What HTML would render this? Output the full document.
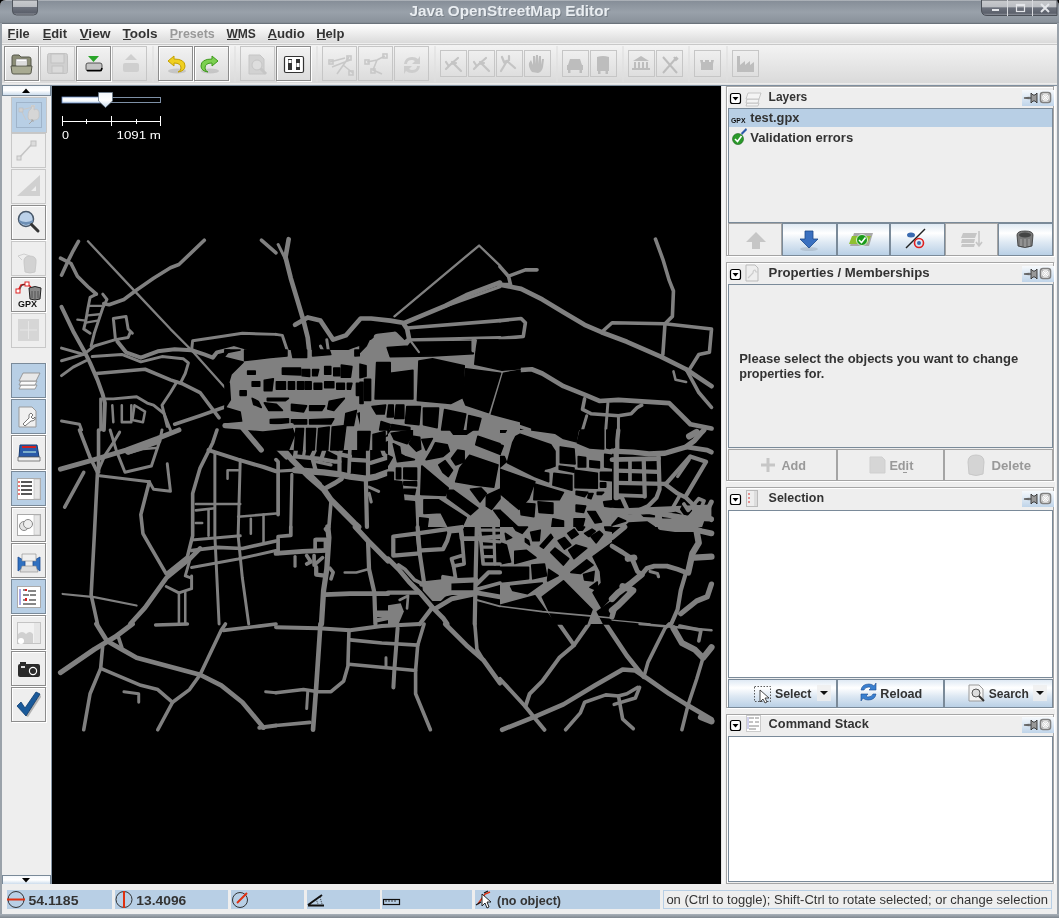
<!DOCTYPE html><html><head><meta charset="utf-8"><title>JOSM</title><style>html,body{margin:0;padding:0;width:1059px;height:918px;overflow:hidden;background:#000}body{position:relative;font-family:"Liberation Sans",sans-serif}</style></head><body><svg width="1059" height="918" viewBox="0 0 1059 918" font-family="Liberation Sans, sans-serif" style="position:absolute;left:0;top:0;will-change:transform"><defs>
<linearGradient id="gOcean" x1="0" y1="0" x2="0" y2="1"><stop offset="0" stop-color="#dde8f3"/><stop offset="0.3" stop-color="#fff"/><stop offset="0.6" stop-color="#dde8f3"/><stop offset="1" stop-color="#b8cfe5"/></linearGradient>
<linearGradient id="gMenu" x1="0" y1="0" x2="0" y2="1"><stop offset="0" stop-color="#fff"/><stop offset="1" stop-color="#dadada"/></linearGradient>
<linearGradient id="gTool" x1="0" y1="0" x2="0" y2="1"><stop offset="0" stop-color="#f3f3f3"/><stop offset="1" stop-color="#dadada"/></linearGradient>
<linearGradient id="gTitle" x1="0" y1="0" x2="0" y2="1"><stop offset="0" stop-color="#c4c8cc"/><stop offset="0.05" stop-color="#868e98"/><stop offset="0.5" stop-color="#99a1aa"/><stop offset="0.92" stop-color="#8a929b"/><stop offset="1" stop-color="#6b737b"/></linearGradient>
<linearGradient id="gScroll" x1="0" y1="0" x2="0" y2="1"><stop offset="0" stop-color="#f4f8fc"/><stop offset="0.5" stop-color="#fff"/><stop offset="1" stop-color="#c6d8ea"/></linearGradient>
<linearGradient id="gHdrBtn" x1="0" y1="0" x2="0" y2="1"><stop offset="0" stop-color="#f6f9fc"/><stop offset="1" stop-color="#bfd4e9"/></linearGradient>
<linearGradient id="gWinBtn" x1="0" y1="0" x2="0" y2="1"><stop offset="0" stop-color="#c9cbce"/><stop offset="0.45" stop-color="#babdc2"/><stop offset="0.5" stop-color="#6c717c"/><stop offset="0.85" stop-color="#5c616c"/><stop offset="1" stop-color="#9ca0a8"/></linearGradient>
<linearGradient id="gFrameB" x1="0" y1="0" x2="0" y2="1"><stop offset="0" stop-color="#aab2ba"/><stop offset="1" stop-color="#7f878f"/></linearGradient>
</defs><rect x="0" y="0" width="1059" height="918" fill="#eeeeee" />
<path d="M0,24 L0,6 Q0,0 6,0 L1053,0 Q1059,0 1059,6 L1059,24 Z" fill="url(#gTitle)"/>
<path d="M0,0 L6,0 Q0,0 0,6 Z M1059,0 L1053,0 Q1059,0 1059,6 Z" fill="#000"/>
<rect x="0" y="23" width="1059" height="1" fill="#6b737b" />
<path d="M12.5,0 L12.5,11 Q12.5,15 16.5,15 L33.5,15 Q37.5,15 37.5,11 L37.5,0 Z" fill="url(#gWinBtn)" stroke="#50555d" stroke-width="1"/>
<text x="409.5" y="16" font-size="14" font-weight="bold" fill="#5a626a" textLength="200" lengthAdjust="spacingAndGlyphs" opacity="0.5" transform="translate(1,1)">Java OpenStreetMap Editor</text>
<text x="409.5" y="16" font-size="14" font-weight="bold" fill="#e9edf1" textLength="200" lengthAdjust="spacingAndGlyphs" >Java OpenStreetMap Editor</text>
<path d="M981.5,0 L981.5,10 Q981.5,15.5 987,15.5 L1057,15.5 L1057,0 Z" fill="url(#gWinBtn)" stroke="#4a4f57" stroke-width="1"/>
<rect x="1007" y="0" width="1" height="16" fill="#d8dade" />
<rect x="1032" y="0" width="1" height="16" fill="#d8dade" />
<rect x="992" y="9" width="7" height="2" fill="#e4e6ea" />
<rect x="1016.5" y="4.5" width="8" height="7" fill="none" stroke="#e4e6ea" stroke-width="1.2" />
<rect x="1016" y="5" width="9" height="1" fill="#e4e6ea" />
<path d="M1041,4 L1049,12 M1049,4 L1041,12" stroke="#e4e6ea" stroke-width="2"/>
<rect x="0" y="23" width="2" height="895" fill="#9aa2aa" />
<rect x="1057" y="23" width="2" height="895" fill="#9aa2aa" />
<rect x="0" y="914" width="1059" height="4" fill="url(#gFrameB)" />
<rect x="2" y="24" width="1055" height="19" fill="url(#gMenu)" />
<rect x="2" y="43" width="1055" height="1" fill="#eeeeee" />
<rect x="2" y="44" width="1055" height="1" fill="#c8c8c8" />
<text x="7.6" y="37.8" font-size="12" font-weight="bold" fill="#333" textLength="22" lengthAdjust="spacingAndGlyphs" >File</text>
<rect x="8" y="39" width="8" height="1" fill="#333" />
<text x="42.699999999999996" y="37.8" font-size="12" font-weight="bold" fill="#333" textLength="24.3" lengthAdjust="spacingAndGlyphs" >Edit</text>
<rect x="43" y="39" width="8" height="1" fill="#333" />
<text x="79.4" y="37.8" font-size="12" font-weight="bold" fill="#333" textLength="31.2" lengthAdjust="spacingAndGlyphs" >View</text>
<rect x="80" y="39" width="9" height="1" fill="#333" />
<text x="122.60000000000001" y="37.8" font-size="12" font-weight="bold" fill="#333" textLength="35" lengthAdjust="spacingAndGlyphs" >Tools</text>
<rect x="123" y="39" width="8" height="1" fill="#333" />
<text x="169.8" y="37.8" font-size="12" font-weight="bold" fill="#999" textLength="45" lengthAdjust="spacingAndGlyphs" >Presets</text>
<rect x="170" y="39" width="9" height="1" fill="#999" />
<text x="226.4" y="37.8" font-size="12" font-weight="bold" fill="#333" textLength="29.4" lengthAdjust="spacingAndGlyphs" >WMS</text>
<rect x="227" y="39" width="12" height="1" fill="#333" />
<text x="267.4" y="37.8" font-size="12" font-weight="bold" fill="#333" textLength="37.5" lengthAdjust="spacingAndGlyphs" >Audio</text>
<rect x="268" y="39" width="9" height="1" fill="#333" />
<text x="316.2" y="37.8" font-size="12" font-weight="bold" fill="#333" textLength="28.2" lengthAdjust="spacingAndGlyphs" >Help</text>
<rect x="317" y="39" width="9" height="1" fill="#333" />
<rect x="2" y="45" width="1055" height="38" fill="url(#gTool)" />
<rect x="2" y="83" width="1055" height="1" fill="#ececec" />
<rect x="2" y="84" width="1055" height="1" fill="#e2e2e2" />
<rect x="5.5" y="47.5" width="34" height="34" fill="none" stroke="#ffffff" stroke-width="1" />
<rect x="4.5" y="46.5" width="34" height="34" fill="none" stroke="#8c8c8c" stroke-width="1" />
<rect x="40.5" y="46.5" width="34" height="34" fill="none" stroke="#c6c6c6" stroke-width="1" />
<rect x="77.5" y="47.5" width="34" height="34" fill="none" stroke="#ffffff" stroke-width="1" />
<rect x="76.5" y="46.5" width="34" height="34" fill="none" stroke="#8c8c8c" stroke-width="1" />
<rect x="112.5" y="46.5" width="34" height="34" fill="none" stroke="#c6c6c6" stroke-width="1" />
<rect x="159.5" y="47.5" width="34" height="34" fill="none" stroke="#ffffff" stroke-width="1" />
<rect x="158.5" y="46.5" width="34" height="34" fill="none" stroke="#8c8c8c" stroke-width="1" />
<rect x="195.5" y="47.5" width="34" height="34" fill="none" stroke="#ffffff" stroke-width="1" />
<rect x="194.5" y="46.5" width="34" height="34" fill="none" stroke="#8c8c8c" stroke-width="1" />
<rect x="240.5" y="46.5" width="34" height="34" fill="none" stroke="#c6c6c6" stroke-width="1" />
<rect x="277.5" y="47.5" width="34" height="34" fill="none" stroke="#ffffff" stroke-width="1" />
<rect x="276.5" y="46.5" width="34" height="34" fill="none" stroke="#8c8c8c" stroke-width="1" />
<rect x="322.5" y="46.5" width="34" height="34" fill="none" stroke="#c6c6c6" stroke-width="1" />
<rect x="358.5" y="46.5" width="34" height="34" fill="none" stroke="#c6c6c6" stroke-width="1" />
<rect x="394.5" y="46.5" width="34" height="34" fill="none" stroke="#c6c6c6" stroke-width="1" />
<rect x="440.5" y="50.5" width="26" height="26" fill="none" stroke="#c6c6c6" stroke-width="1" />
<rect x="468.5" y="50.5" width="26" height="26" fill="none" stroke="#c6c6c6" stroke-width="1" />
<rect x="496.5" y="50.5" width="26" height="26" fill="none" stroke="#c6c6c6" stroke-width="1" />
<rect x="524.5" y="50.5" width="26" height="26" fill="none" stroke="#c6c6c6" stroke-width="1" />
<rect x="562.5" y="50.5" width="26" height="26" fill="none" stroke="#c6c6c6" stroke-width="1" />
<rect x="590.5" y="50.5" width="26" height="26" fill="none" stroke="#c6c6c6" stroke-width="1" />
<rect x="628.5" y="50.5" width="26" height="26" fill="none" stroke="#c6c6c6" stroke-width="1" />
<rect x="656.5" y="50.5" width="26" height="26" fill="none" stroke="#c6c6c6" stroke-width="1" />
<rect x="694.5" y="50.5" width="26" height="26" fill="none" stroke="#c6c6c6" stroke-width="1" />
<rect x="732.5" y="50.5" width="26" height="26" fill="none" stroke="#c6c6c6" stroke-width="1" />
<rect x="152" y="46" width="2" height="36" fill="#e0e0e0" opacity="0.6"/>
<rect x="234" y="46" width="2" height="36" fill="#e0e0e0" opacity="0.6"/>
<rect x="316" y="46" width="2" height="36" fill="#e0e0e0" opacity="0.6"/>
<rect x="434" y="46" width="2" height="36" fill="#e0e0e0" opacity="0.6"/>
<rect x="556" y="46" width="2" height="36" fill="#e0e0e0" opacity="0.6"/>
<rect x="622" y="46" width="2" height="36" fill="#e0e0e0" opacity="0.6"/>
<rect x="688" y="46" width="2" height="36" fill="#e0e0e0" opacity="0.6"/>
<rect x="726" y="46" width="2" height="36" fill="#e0e0e0" opacity="0.6"/>

<!-- open folder -->
<g transform="translate(11,54)">
<path d="M1,3 Q1,1 3,1 L8,1 L10,3 L18,3 Q20,3 20,5 L20,12 L1,12 Z" fill="#8b8d76" stroke="#55574a" stroke-width="1"/>
<rect x="5" y="5" width="11" height="8" fill="#fff" stroke="#777" stroke-width="0.6"/>
<path d="M6,8 H15 M6,10 H15" stroke="#aaa" stroke-width="0.8"/>
<path d="M0,12 L21,12 L20,19 Q20,20 18,20 L3,20 Q1,20 1,19 Z" fill="#a9ab93" stroke="#55574a" stroke-width="1"/>
</g>
<!-- save disabled -->
<g transform="translate(47,53)" fill="#d0d0d0" stroke="#c2c2c2">
<rect x="0.5" y="0.5" width="20" height="20" rx="2"/>
<rect x="4" y="1" width="13" height="9" fill="#dadada"/>
<rect x="5" y="13" width="11" height="7" fill="#dadada"/>
</g>
<!-- download -->
<g transform="translate(85,55)">
<path d="M3,1 L14,1 L8.5,7 Z" fill="#2aa52a"/>
<rect x="1" y="8" width="16" height="8" rx="2" fill="#c4c4c4" stroke="#333" stroke-width="0.8"/>
<path d="M2,15.5 H16 L17,13" stroke="#000" stroke-width="1.6" fill="none"/>
</g>
<!-- upload disabled -->
<g transform="translate(121,53)" fill="#cfcfcf">
<path d="M4,7 L10,1 L16,7 Z"/><rect x="2" y="10" width="16" height="9" rx="2"/>
</g>
<!-- undo -->
<g transform="translate(166,54)">
<ellipse cx="11" cy="17" rx="9" ry="2.5" fill="#000" opacity="0.12"/>
<path d="M8,2 L2,7 L8,12 L8,9 Q15,9 15,14 Q15,17 12,18 Q19,17 19,12 Q19,5 8,5 Z" fill="#f0d020" stroke="#c4a000" stroke-width="1"/>
</g>
<!-- redo -->
<g transform="translate(200,54)">
<ellipse cx="10" cy="17" rx="9" ry="2.5" fill="#000" opacity="0.12"/>
<path d="M12,2 L18,7 L12,12 L12,9 Q5,9 5,14 Q5,17 8,18 Q1,17 1,12 Q1,5 12,5 Z" fill="#7cd050" stroke="#3e9a1c" stroke-width="1"/>
</g>
<!-- zoom doc disabled -->
<g transform="translate(248,54)" fill="#d2d2d2" stroke="#c6c6c6">
<path d="M1,1 L12,1 L16,5 L16,20 L1,20 Z"/>
<circle cx="9" cy="11" r="5" fill="#dedede"/>
<path d="M12.5,14.5 L18,20" stroke-width="3"/>
</g>
<!-- preferences -->
<g transform="translate(284,56)">
<rect x="0.5" y="0.5" width="19" height="16" rx="1.5" fill="#fff" stroke="#333" stroke-width="1.2"/>
<rect x="4" y="3" width="4" height="11" fill="#333"/><rect x="4.5" y="4" width="3" height="3" fill="#fff"/>
<rect x="12" y="3" width="4" height="11" fill="#333"/><rect x="12.5" y="7" width="3" height="4" fill="#fff"/>
</g>
<!-- disabled drawing tools -->
<g stroke="#c8c8c8" fill="none" stroke-width="1.6">
<path d="M330,62 L345,58 M332,67 L350,60 M337,74 L349,57 M343,65 L353,73"/>
<rect x="329" y="60" width="4" height="4"/><rect x="347" y="56" width="4" height="4"/><rect x="349" y="71" width="4" height="4"/>
<path d="M367,62 L377,60 L385,56 M377,60 L373,70 L382,74"/>
<rect x="365" y="60" width="4" height="4"/><rect x="383" y="54" width="4" height="4"/><rect x="371" y="69" width="4" height="4"/>
</g>
<g transform="translate(402,55)" fill="#cdcdcd">
<path d="M2,9 Q3,2 10,2 Q14,2 16,4 L18,1 L18,9 L10,9 L13,6 Q11,5 10,5 Q5,5 5,9 Z"/>
<path d="M18,11 Q17,18 10,18 Q6,18 4,16 L2,19 L2,11 L10,11 L7,14 Q9,15 10,15 Q15,15 15,11 Z"/>
</g>
<g stroke="#c4c4c4" fill="none" stroke-width="2.2" stroke-linecap="round">
<path d="M446,69 L451,64 L456,63 M451,64 L458,58 M452,62 L461,71 M448,65 L446,62"/>
<path d="M474,69 L479,64 L484,63 M479,64 L486,58 M480,62 L489,71 M476,65 L474,62"/>
<path d="M502,57 L504,62 L509,60 L509,56 M507,61 L501,71 M507,61 L515,68"/>
</g>
<path d="M532,72 Q528,67 529,63 L531,60 L533,65 L533,56 L535,56 L535,64 L536,55 L538,55 L538,64 L539,56 L541,56 L541,65 L542,59 L544,59 L543,67 Q542,72 538,73 Z" fill="#bdbdbd"/>
<g fill="#bdbdbd">
<path d="M568,65 L570,59 L580,59 L582,65 L583,65 L583,70 L567,70 L567,65 Z"/><rect x="568" y="70" width="2.5" height="3"/><rect x="579.5" y="70" width="2.5" height="3"/>
<path d="M597,57 Q603,55 609,57 L609,71 L597,71 Z"/><rect x="598" y="71" width="2.5" height="3"/><rect x="605.5" y="71" width="2.5" height="3"/>
<path d="M633,61 L641,56 L649,61 Z"/><rect x="634" y="62" width="2" height="6"/><rect x="638" y="62" width="2" height="6"/><rect x="642" y="62" width="2" height="6"/><rect x="646" y="62" width="2" height="6"/><rect x="632" y="68" width="18" height="2"/>
<path d="M700,60 L703,60 L703,62 L705,62 L705,60 L709,60 L709,62 L711,62 L711,60 L714,60 L713,64 L713,70 L701,70 L701,64 Z"/>
<path d="M737,56 L740,56 L740,65 L745,61 L745,65 L750,61 L750,65 L754,62 L754,72 L737,72 Z"/>
</g>
<path d="M663,57 L677,73 M677,57 L663,73 M674,57 L676,60 L678,58" stroke="#bdbdbd" stroke-width="2" fill="none"/>

<rect x="2" y="85" width="49" height="799" fill="#eeeeee" />
<rect x="50" y="96" width="1" height="779" fill="#f6f6f6" />
<rect x="51" y="85" width="1" height="800" fill="#8696a6" />
<rect x="2" y="85" width="1055" height="1" fill="#7f8f9f" />
<rect x="2.5" y="85.5" width="48" height="10" fill="url(#gScroll)" stroke="#7a8a99"/>
<path d="M22,93 L26,88.5 L30,93 Z" fill="#000"/>
<rect x="2.5" y="875.5" width="48" height="9" fill="url(#gScroll)" stroke="#7a8a99"/>
<path d="M22,878 L26,882.5 L30,878 Z" fill="#000"/>
<rect x="11" y="97" width="36" height="36" fill="#b8cfe5" />
<rect x="11.5" y="97.5" width="35" height="35" fill="none" stroke="#c6c6c6" stroke-width="1" />
<rect x="11.5" y="133.5" width="34" height="34" fill="none" stroke="#c8c8c8" stroke-width="1" />
<rect x="11.5" y="169.5" width="34" height="34" fill="none" stroke="#c8c8c8" stroke-width="1" />
<rect x="12.5" y="206.5" width="34" height="34" fill="none" stroke="#fff" stroke-width="1" />
<rect x="11.5" y="205.5" width="34" height="34" fill="none" stroke="#8c8c8c" stroke-width="1" />
<rect x="11.5" y="241.5" width="34" height="34" fill="none" stroke="#c8c8c8" stroke-width="1" />
<rect x="12.5" y="278.5" width="34" height="34" fill="none" stroke="#fff" stroke-width="1" />
<rect x="11.5" y="277.5" width="34" height="34" fill="none" stroke="#8c8c8c" stroke-width="1" />
<rect x="11.5" y="313.5" width="34" height="34" fill="none" stroke="#c8c8c8" stroke-width="1" />
<rect x="11" y="363" width="35" height="35" fill="#b8cfe5" />
<rect x="11.5" y="363.5" width="34" height="34" fill="none" stroke="#7a8a99" stroke-width="1" />
<rect x="46" y="363" width="1" height="36" fill="#fff" />
<rect x="11" y="398" width="36" height="1" fill="#fff" />
<rect x="11" y="399" width="35" height="35" fill="#b8cfe5" />
<rect x="11.5" y="399.5" width="34" height="34" fill="none" stroke="#7a8a99" stroke-width="1" />
<rect x="46" y="399" width="1" height="36" fill="#fff" />
<rect x="11" y="434" width="36" height="1" fill="#fff" />
<rect x="12.5" y="436.5" width="34" height="34" fill="none" stroke="#fff" stroke-width="1" />
<rect x="11.5" y="435.5" width="34" height="34" fill="none" stroke="#8c8c8c" stroke-width="1" />
<rect x="11" y="471" width="35" height="35" fill="#b8cfe5" />
<rect x="11.5" y="471.5" width="34" height="34" fill="none" stroke="#7a8a99" stroke-width="1" />
<rect x="46" y="471" width="1" height="36" fill="#fff" />
<rect x="11" y="506" width="36" height="1" fill="#fff" />
<rect x="12.5" y="508.5" width="34" height="34" fill="none" stroke="#fff" stroke-width="1" />
<rect x="11.5" y="507.5" width="34" height="34" fill="none" stroke="#8c8c8c" stroke-width="1" />
<rect x="12.5" y="544.5" width="34" height="34" fill="none" stroke="#fff" stroke-width="1" />
<rect x="11.5" y="543.5" width="34" height="34" fill="none" stroke="#8c8c8c" stroke-width="1" />
<rect x="11" y="579" width="35" height="35" fill="#b8cfe5" />
<rect x="11.5" y="579.5" width="34" height="34" fill="none" stroke="#7a8a99" stroke-width="1" />
<rect x="46" y="579" width="1" height="36" fill="#fff" />
<rect x="11" y="614" width="36" height="1" fill="#fff" />
<rect x="12.5" y="616.5" width="34" height="34" fill="none" stroke="#fff" stroke-width="1" />
<rect x="11.5" y="615.5" width="34" height="34" fill="none" stroke="#8c8c8c" stroke-width="1" />
<rect x="12.5" y="652.5" width="34" height="34" fill="none" stroke="#fff" stroke-width="1" />
<rect x="11.5" y="651.5" width="34" height="34" fill="none" stroke="#8c8c8c" stroke-width="1" />
<rect x="12.5" y="688.5" width="34" height="34" fill="none" stroke="#fff" stroke-width="1" />
<rect x="11.5" y="687.5" width="34" height="34" fill="none" stroke="#8c8c8c" stroke-width="1" />

<!-- select tool -->
<rect x="16.5" y="102.5" width="25" height="25" fill="none" stroke="#9fb4ca"/>
<g stroke="#c8c8c8" fill="none" stroke-width="1"><path d="M21,110 L33,107 M21,110 L26,120"/></g>
<rect x="19" y="108" width="4" height="4" fill="#d0d0d0" stroke="#bbb" stroke-width="0.6"/>
<rect x="31" y="105" width="4" height="3" fill="#d0d0d0"/>
<path d="M28,117 Q28,110 31,109 L32,106 L34,106 L34,110 L36,109 L38,110 L39,112 L39,117 Q38,120 35,120 L31,120 Q28,120 28,117 Z" fill="#d6d6d6" stroke="#c4c4c4" stroke-width="0.8"/>
<path d="M29,124 L33,120 M31,120 L33,120 L33,122" stroke="#a8a8a8" stroke-width="1" fill="none"/>
<!-- draw line -->
<path d="M19,158 L33,143" stroke="#c4c4c4" stroke-width="1.6"/>
<rect x="17" y="156" width="4" height="4" fill="#e0e0e0" stroke="#c0c0c0"/><rect x="31" y="141" width="5" height="5" fill="#dcdcdc" stroke="#c0c0c0"/>
<!-- triangle -->
<path d="M17,196 L40,175 L40,196 Z M31,191 L36,191 L36,186 Z" fill="#d0d0d0" fill-rule="evenodd"/>
<!-- zoom -->
<circle cx="26" cy="219" r="7.5" fill="#bcd2ea" stroke="#48586a" stroke-width="1.5"/>
<path d="M19,220 Q26,224 33,220 L33,222 Q26,228 19,222 Z" fill="#6d8fb5"/>
<path d="M31.5,224.5 L38,231" stroke="#333" stroke-width="3" stroke-linecap="round"/>
<!-- delete disabled -->
<g fill="#d2d2d2" stroke="#c4c4c4" stroke-width="0.8"><path d="M24,263 Q23,256 30,256 Q37,256 36,263 L35,272 Q30,274 25,272 Z"/></g>
<path d="M18,256 L24,254 L30,256 M22,260 L18,256" stroke="#cfcfcf" stroke-width="1" fill="none"/>
<!-- gpx -->
<path d="M18,291 L21,285 L27,284 L31,287" stroke="#d22" stroke-width="1.5" fill="none"/>
<path d="M19,291 L22,285 L27,284" stroke="#222" stroke-width="0.8" fill="none"/>
<rect x="16" y="289" width="4" height="4" fill="#fff" stroke="#d22"/><rect x="25" y="282" width="4" height="4" fill="#fff" stroke="#d22"/>
<path d="M29,288 Q35,285 41,288 L40,299 Q35,301 30,299 Z" fill="#888" stroke="#222" stroke-width="1"/>
<path d="M32,291 V298 M35,291 V299 M38,291 V298" stroke="#444" stroke-width="0.8"/>
<text x="18" y="307" font-size="8.5" font-weight="bold" fill="#111" textLength="19" lengthAdjust="spacingAndGlyphs">GPX</text>
<!-- extrude disabled -->
<rect x="18" y="319" width="21" height="22" fill="#d6d6d6"/>
<path d="M28.5,321 V339 M20,330 H37" stroke="#e6e6e6" stroke-width="1"/>
<!-- layers -->
<g transform="translate(19,372)" stroke="#888" stroke-width="0.8">
<path d="M2,13 L18,13 L16,17 L0,17 Z" fill="#fafafa"/>
<path d="M2,9 L18,9 L16,13 L0,13 Z" fill="#fafafa"/>
<path d="M4,1 L21,1 L17,9 L0,9 Z" fill="#e8e8e8"/>
</g>
<!-- properties -->
<g transform="translate(18,406)">
<path d="M1,1 L14,1 L18,5 L18,21 L1,21 Z" fill="#f0f0f0" stroke="#999"/>
<path d="M5,18 L11,12 Q10,8 13,7 L15,9 L13,11 L15,13 L17,11 Q18,15 13,15 L7,20 Z" fill="#fff" stroke="#555" stroke-width="0.8"/>
</g>
<!-- validator book -->
<g transform="translate(17,442)">
<path d="M3,3 L20,3 L22,15 L2,15 Z" fill="#2a5aa8" stroke="#163a70"/>
<rect x="5" y="4" width="14" height="2" fill="#d02020"/>
<path d="M1,15 L23,15 L23,19 L1,19 Z" fill="#eee" stroke="#666" stroke-width="0.8"/>
<path d="M6,10 H19" stroke="#cfe" stroke-width="1"/>
</g>
<!-- selection list -->
<g transform="translate(17,478)">
<rect x="0.5" y="0.5" width="23" height="21" fill="#fff" stroke="#aaa"/>
<rect x="17" y="1" width="6" height="20" fill="#e6e6e6" stroke="#bbb" stroke-width="0.6"/>
<path d="M4,4 H15 M4,8 H15 M4,12 H15 M4,16 H15" stroke="#222" stroke-width="1.3"/>
<path d="M2,3 V5 M2,7 V9 M2,11 V13 M2,15 V17" stroke="#d22" stroke-width="1.2"/>
</g>
<!-- relation list -->
<g transform="translate(17,514)">
<rect x="0.5" y="0.5" width="23" height="21" fill="#fff" stroke="#aaa"/>
<rect x="17" y="1" width="6" height="20" fill="#e6e6e6" stroke="#bbb" stroke-width="0.6"/>
<circle cx="7" cy="12" r="4.5" fill="#e4e4e4" stroke="#888"/><circle cx="11" cy="10" r="4.5" fill="#eee" stroke="#888"/>
</g>
<!-- conflict -->
<g transform="translate(16,551)">
<path d="M2,6 L9,10 L9,15 L2,20 Z M24,6 L17,10 L17,15 L24,20 Z" fill="#2f70c0" stroke="#1a4a90" stroke-width="0.8"/>
<path d="M6,3 L20,3 L20,10 L6,10 Z" fill="#f0f0f0" stroke="#888" stroke-width="0.6"/>
<path d="M6,15 L20,15 L22,21 L4,21 Z" fill="#ddd" stroke="#888" stroke-width="0.6"/>
</g>
<!-- command stack -->
<g transform="translate(17,586)">
<rect x="0.5" y="0.5" width="23" height="21" fill="#fff" stroke="#aaa"/>
<path d="M6,4 H10 M11,5 H19 M6,9 H12 M13,9 H19 M6,14 H10 M12,14 H19 M6,18 H19" stroke="#111" stroke-width="1.2"/>
<path d="M3,3 V19" stroke="#55c" stroke-width="1"/>
<rect x="8" y="3" width="2" height="2" fill="#d22"/><rect x="8" y="12" width="2" height="3" fill="#d22"/>
</g>
<!-- history disabled -->
<g transform="translate(17,622)">
<rect x="0.5" y="0.5" width="23" height="21" fill="#f2f2f2" stroke="#c4c4c4"/>
<rect x="17" y="1" width="6" height="20" fill="#e6e6e6"/>
<path d="M1,21 L1,12 Q5,8 9,12 Q13,8 16,12 L16,21 Z" fill="#d0d0d0"/>
<circle cx="4" cy="19" r="3" fill="#fff"/>
</g>
<!-- camera -->
<g transform="translate(17,662)">
<rect x="1" y="2" width="22" height="13" rx="2" fill="#2a2a2a"/>
<rect x="3" y="0" width="6" height="3" fill="#2a2a2a"/><rect x="4" y="4" width="4" height="2" fill="#ddd"/>
<circle cx="16" cy="9" r="4.2" fill="#fff"/><circle cx="16" cy="9" r="3" fill="#2a2a2a"/>
</g>
<!-- checkmark -->
<path d="M17,706 L21,702 L25,708 L36,692 L40,694 L26,716 Z" fill="#1a5a9a" stroke="#0c3c70" stroke-width="0.8"/>
<path d="M26,716 L40,694 L41,697 L28,717 Z" fill="#000" opacity="0.25"/>

<svg x="52" y="86" width="669" height="798" viewBox="0 0 669 798" overflow="hidden"><rect width="669" height="798" fill="#000"/><g fill="none" stroke="#808080" stroke-linejoin="round" stroke-linecap="round"><g transform="translate(0,150) scale(0.21152)">
<polyline points="170,25 400,270 560,440 660,540 830,730 880,780" stroke-width="11"/>
<polyline points="720,20 600,135 560,150 480,200 400,255 340,300 270,325 245,320" stroke-width="17"/>
<polyline points="125,25 100,70 75,120 45,185" stroke-width="17"/>
<polyline points="40,105 90,130 120,190 170,240 210,275" stroke-width="17"/>
<polyline points="210,275 180,290 170,340 160,400 150,440 180,460" stroke-width="14"/>
<polyline points="240,275 260,300 240,340 220,400 200,460 185,520" stroke-width="14"/>
<polyline points="175,330 235,330" stroke-width="11"/>
<polyline points="170,375 225,370" stroke-width="11"/>
<polyline points="160,410 215,400" stroke-width="11"/>
<polyline points="120,395 160,400" stroke-width="11"/>
<polyline points="45,335 100,450 150,540 180,600 215,680 240,750 250,790 245,917" stroke-width="19"/>
<polyline points="230,770 230,917" stroke-width="14"/>
<polyline points="45,530 150,560 200,520 300,490 360,480 370,455" stroke-width="14"/>
<polyline points="300,490 290,390 350,380 360,440 380,460" stroke-width="14"/>
<polyline points="45,590 150,560" stroke-width="14"/>
<polyline points="45,660 100,620 160,590" stroke-width="14"/>
<polyline points="310,500 350,550 420,575 500,545 580,535 660,540 720,560 760,575 780,550 860,530 960,560 1059,570" stroke-width="19"/>
<polyline points="660,540 665,495 800,475 900,460 1059,465" stroke-width="14"/>
<polyline points="190,570 330,560 420,595 520,570 620,580 645,600 630,650 610,690" stroke-width="14"/>
<polyline points="210,650 440,630 560,680 620,700 700,740 745,800 790,860" stroke-width="17"/>
<polyline points="590,690 560,740 520,800 545,900" stroke-width="14"/>
<polyline points="245,770 290,770 400,760 450,790 480,800 530,840 560,917" stroke-width="14"/>
<polyline points="285,800 290,880" stroke-width="12"/>
<polyline points="330,800 330,880 375,880 375,800" stroke-width="12"/>
<polyline points="390,800 440,830 430,880 380,870 390,800" stroke-width="12"/>
<polyline points="45,875 130,890 140,917" stroke-width="14"/>
<polyline points="580,890 700,850 840,800 1059,750" stroke-width="17"/>
<polyline points="990,20 1059,80" stroke-width="17"/>
</g>
<g transform="translate(224,150) scale(0.21152)">
<polyline points="60,15 45,100 70,200 100,300 130,400 150,480 160,570" stroke-width="22"/>
<polyline points="10,40 45,110" stroke-width="14"/>
<polyline points="90,420 150,385 210,400 250,460 270,490 330,470 400,390 450,390 540,400 600,410 620,440 630,490 600,510 540,500 480,480 430,520 370,540 320,560 250,580" stroke-width="22"/>
<polyline points="480,480 560,470 590,500 500,515" stroke-width="36"/>
<polyline points="240,490 250,560" stroke-width="14"/>
<polyline points="210,520 230,560" stroke-width="14"/>
<polyline points="560,380 960,45 1059,140" stroke-width="11"/>
<polyline points="610,410 800,330 900,280 1059,220" stroke-width="22"/>
<polyline points="750,350 1059,240" stroke-width="14"/>
<polyline points="620,435 1059,400" stroke-width="17"/>
<polyline points="630,490 1059,480" stroke-width="14"/>
<polyline points="940,490 935,545" stroke-width="14"/>
<polyline points="620,490 670,550" stroke-width="12"/>
<polyline points="0,465 30,470 60,560" stroke-width="14"/>
<polyline points="0,580 300,560 500,580 700,575 900,610 1059,650" stroke-width="22"/>
<polyline points="470,590 460,780" stroke-width="14"/>
<polyline points="655,590 660,780" stroke-width="14"/>
<polyline points="540,595 545,640 650,640" stroke-width="14"/>
<polyline points="400,780 600,790 800,800 1000,850 1059,880" stroke-width="22"/>
<polyline points="880,640 880,770 850,790" stroke-width="12"/>
<polyline points="1059,660 1000,850" stroke-width="14"/>
<polyline points="470,800 500,917" stroke-width="14"/>
<polyline points="540,800 560,917" stroke-width="14"/>
<polyline points="610,800 630,917" stroke-width="14"/>
<polyline points="690,810 700,917" stroke-width="14"/>
<polyline points="780,820 790,917" stroke-width="14"/>
<polyline points="850,830 840,917" stroke-width="14"/>
<polyline points="420,650 400,917" stroke-width="19"/>
</g>
<g transform="translate(448,150) scale(0.21152)">
<polyline points="0,145 40,190 50,230 0,230" stroke-width="17"/>
<polyline points="40,190 120,160 175,160" stroke-width="17"/>
<polyline points="0,230 100,250 200,300 300,360 400,420 480,455 600,500 760,570 880,630 1000,710" stroke-width="22"/>
<polyline points="480,455 530,410 780,415 1000,440 990,550 940,560 890,640" stroke-width="17"/>
<polyline points="735,15 770,110 800,210 820,260 815,380 780,415 770,560" stroke-width="17"/>
<polyline points="0,400 100,390 120,410 110,475 0,485" stroke-width="17"/>
<polyline points="0,640 150,630 200,650 300,710 400,750 470,780 560,775 800,790 850,840 900,890 1000,910" stroke-width="22"/>
<polyline points="880,630 940,740 1000,810" stroke-width="17"/>
<polyline points="820,640 830,680 880,690" stroke-width="12"/>
<polyline points="400,770 390,820 430,840 560,850 620,840 650,810 670,800" stroke-width="17"/>
<polyline points="410,850 390,917" stroke-width="14"/>
<polyline points="510,790 500,917" stroke-width="14"/>
<polyline points="560,850 560,917" stroke-width="14"/>
<polyline points="0,870 140,917" stroke-width="17"/>
</g>
<g transform="translate(0,344) scale(0.21152)">
<polyline points="40,185 200,140 350,95 500,40 600,0" stroke-width="24"/>
<polyline points="360,100 500,50" stroke-width="34"/>
<polyline points="130,0 180,130 215,200" stroke-width="17"/>
<polyline points="220,0 220,200" stroke-width="17"/>
<polyline points="275,0 305,100 345,200 470,170 510,50 520,0" stroke-width="14"/>
<polyline points="360,110 430,90 490,85" stroke-width="12"/>
<polyline points="215,200 200,500 185,780 215,917" stroke-width="17"/>
<polyline points="215,200 250,120 290,60 320,10" stroke-width="14"/>
<polyline points="150,200 60,365" stroke-width="17"/>
<polyline points="215,215 460,245 480,280 560,290 545,160" stroke-width="14"/>
<polyline points="460,245 420,400 430,490 470,560 540,680 640,600 665,500 665,300 700,180 760,60 780,0" stroke-width="17"/>
<polyline points="370,917 440,840 540,700 650,610 700,560" stroke-width="22"/>
<polyline points="740,95 880,140 1000,175 1059,195" stroke-width="19"/>
<polyline points="900,70 960,30 1059,0" stroke-width="19"/>
<polyline points="770,110 770,500 790,917" stroke-width="14"/>
<polyline points="890,140 880,500 900,700 930,917" stroke-width="14"/>
<polyline points="830,230 830,190 880,190" stroke-width="12"/>
<polyline points="680,350 890,350" stroke-width="12"/>
<polyline points="680,380 770,370" stroke-width="12"/>
<polyline points="680,440 710,440" stroke-width="12"/>
<polyline points="740,380 740,500" stroke-width="12"/>
<polyline points="880,410 1059,395" stroke-width="12"/>
<polyline points="940,420 940,490" stroke-width="12"/>
<polyline points="1000,400 1000,530" stroke-width="12"/>
<polyline points="660,520 890,500" stroke-width="14"/>
<polyline points="660,570 780,555 900,560 1059,525" stroke-width="17"/>
<polyline points="660,650 880,610 1059,570" stroke-width="14"/>
<polyline points="650,620 630,690 660,700" stroke-width="14"/>
<polyline points="540,740 600,770 660,750 660,690" stroke-width="14"/>
<polyline points="600,770 600,917" stroke-width="12"/>
<polyline points="630,770 630,917" stroke-width="12"/>
<polyline points="50,775 200,790 400,830" stroke-width="10"/>
</g>
<g transform="translate(0,538) scale(0.21152)">
<polyline points="40,230 200,120 300,60 380,0" stroke-width="24"/>
<polyline points="210,0 260,80 330,120 400,160 550,200 700,240 800,290 900,370 1000,490" stroke-width="22"/>
<polyline points="310,50 330,110" stroke-width="17"/>
<polyline points="240,100 230,210 180,330 150,500" stroke-width="17"/>
<polyline points="230,210 420,290 500,310 570,370 500,500" stroke-width="17"/>
<polyline points="570,370 650,310 700,240 800,30 820,0" stroke-width="17"/>
<polyline points="810,30 980,10 1059,0" stroke-width="17"/>
<polyline points="340,320 410,330 410,370" stroke-width="14"/>
<polyline points="490,5 640,0" stroke-width="17"/>
<polyline points="1010,320 1059,325" stroke-width="14"/>
<polyline points="980,490 1059,480" stroke-width="19"/>
</g>
<g transform="translate(224,538) scale(0.21152)">
<polyline points="0,15 200,20 350,30 500,10 680,0" stroke-width="19"/>
<polyline points="210,0 190,300 175,500" stroke-width="22"/>
<polyline points="345,30 340,200 320,270 260,320 200,320 130,310 0,325" stroke-width="17"/>
<polyline points="350,75 500,90 670,100 700,0" stroke-width="17"/>
<polyline points="345,190 560,210 660,220 660,330 730,500" stroke-width="17"/>
<polyline points="670,100 660,220" stroke-width="17"/>
<polyline points="575,20 560,210 555,300" stroke-width="19"/>
<polyline points="520,200 520,160" stroke-width="14"/>
<polyline points="150,320 145,400" stroke-width="14"/>
<polyline points="0,480 160,465" stroke-width="17"/>
<polyline points="800,0 900,100 980,170 1059,280" stroke-width="22"/>
<polyline points="940,0 950,120 980,170" stroke-width="17"/>
</g>
<g transform="translate(448,538) scale(0.21152)">
<polyline points="0,260 120,390 160,440 210,500" stroke-width="19"/>
<polyline points="280,0 350,100 420,0" stroke-width="19"/>
<polyline points="350,100 280,160 200,270 140,330 120,390" stroke-width="19"/>
<polyline points="10,500 160,440 300,380 450,290 580,215 640,220 700,260 800,330 880,380 1000,450" stroke-width="22"/>
<polyline points="500,0 600,150 680,250" stroke-width="22"/>
<polyline points="680,250 700,180 740,100 780,20 800,0" stroke-width="17"/>
<polyline points="820,20 860,90 920,120 960,160 1000,110" stroke-width="29"/>
<polyline points="850,10 950,30 940,80" stroke-width="17"/>
<polyline points="660,0 1000,30" stroke-width="12"/>
<polyline points="960,160 930,260 890,380 860,500" stroke-width="17"/>
<polyline points="310,500 380,420 400,370 500,335 560,340 600,330 650,300" stroke-width="17"/>
<polyline points="560,340 580,450 630,495" stroke-width="17"/>
<polyline points="540,380 640,350 660,300" stroke-width="17"/>
<polyline points="950,440 1000,460" stroke-width="29"/>
</g>
<g transform="translate(448,344) scale(0.10576)">
<polygon points="0,0 1059,0 1059,917 0,917" fill="#808080" stroke="none"/>
<polygon points="190,40 480,140 520,200 520,340 470,360 420,370 410,400 460,410 460,490 330,440 70,310 120,120 150,60" fill="#000" stroke="#000" stroke-width="15.1" stroke-linejoin="round"/>
<polygon points="0,370 330,490 270,650 180,750 0,600" fill="#000" stroke="#000" stroke-width="15.1" stroke-linejoin="round"/>
<polygon points="330,510 600,590 560,660 320,660" fill="#000" stroke="#000" stroke-width="15.1" stroke-linejoin="round"/>
<polygon points="570,160 700,180 710,320 570,310" fill="#000" stroke="#000" stroke-width="15.1" stroke-linejoin="round"/>
<polygon points="740,250 810,260 810,350 740,350" fill="#000" stroke="#000" stroke-width="15.1" stroke-linejoin="round"/>
<polygon points="850,290 940,300 940,360 850,350" fill="#000" stroke="#000" stroke-width="15.1" stroke-linejoin="round"/>
<polygon points="990,230 1059,240 1059,360 990,350" fill="#000" stroke="#000" stroke-width="15.1" stroke-linejoin="round"/>
<polygon points="560,340 700,360 700,400 560,370" fill="#000" stroke="#000" stroke-width="15.1" stroke-linejoin="round"/>
<polygon points="710,380 920,410 920,550 710,545" fill="#000" stroke="#000" stroke-width="15.1" stroke-linejoin="round"/>
<polygon points="510,410 680,430 680,570 500,520" fill="#000" stroke="#000" stroke-width="15.1" stroke-linejoin="round"/>
<polygon points="950,400 1059,400 1059,480 950,470" fill="#000" stroke="#000" stroke-width="15.1" stroke-linejoin="round"/>
<polygon points="950,500 1000,500 1000,540 950,540" fill="#000" stroke="#000" stroke-width="15.1" stroke-linejoin="round"/>
<polygon points="760,0 980,0 980,180 850,170 730,120" fill="#000" stroke="#000" stroke-width="15.1" stroke-linejoin="round"/>
<polygon points="300,0 740,0 720,110 600,80 520,30" fill="#000" stroke="#000" stroke-width="15.1" stroke-linejoin="round"/>
<polygon points="1010,0 1059,0 1059,180 1010,170" fill="#000" stroke="#000" stroke-width="15.1" stroke-linejoin="round"/>
<polygon points="0,250 40,250 60,300 0,350" fill="#000" stroke="#000" stroke-width="15.1" stroke-linejoin="round"/>
<polygon points="0,140 30,150 0,230" fill="#000" stroke="#000" stroke-width="15.1" stroke-linejoin="round"/>
<polygon points="190,690 330,700 320,820 200,800" fill="#000" stroke="#000" stroke-width="15.1" stroke-linejoin="round"/>
<polygon points="360,680 500,690 500,790 370,780" fill="#000" stroke="#000" stroke-width="15.1" stroke-linejoin="round"/>
<polygon points="720,710 810,720 790,780 720,770" fill="#000" stroke="#000" stroke-width="15.1" stroke-linejoin="round"/>
<polygon points="830,770 900,770 960,870 900,880" fill="#000" stroke="#000" stroke-width="15.1" stroke-linejoin="round"/>
<polygon points="500,840 600,860 600,917 490,917" fill="#000" stroke="#000" stroke-width="15.1" stroke-linejoin="round"/>
<polygon points="700,840 800,840 780,917 700,917" fill="#000" stroke="#000" stroke-width="15.1" stroke-linejoin="round"/>
<polygon points="0,760 170,917 0,917" fill="#000" stroke="#000" stroke-width="15.1" stroke-linejoin="round"/>
<polygon points="980,680 1059,670 1059,730 990,720" fill="#000" stroke="#000" stroke-width="15.1" stroke-linejoin="round"/>
<polygon points="720,580 830,590 800,630 720,610" fill="#000" stroke="#000" stroke-width="15.1" stroke-linejoin="round"/>
<polygon points="840,600 880,600 860,650 830,640" fill="#000" stroke="#000" stroke-width="15.1" stroke-linejoin="round"/>
<polygon points="920,590 980,590 960,610 920,610" fill="#000" stroke="#000" stroke-width="15.1" stroke-linejoin="round"/>
<polygon points="0,0 60,0 50,20 0,20" fill="#000" stroke="#000" stroke-width="15.1" stroke-linejoin="round"/>
</g>
<g transform="translate(560,344) scale(0.10576)">
<polygon points="0,745 940,705 940,917 0,917" fill="#808080" stroke="none"/>
<polygon points="150,770 240,770 220,795 160,790" fill="#000" stroke="#000" stroke-width="15.1" stroke-linejoin="round"/>
<polygon points="280,795 400,790 400,820 300,815" fill="#000" stroke="#000" stroke-width="15.1" stroke-linejoin="round"/>
<polygon points="160,880 330,870 400,917 120,917" fill="#000" stroke="#000" stroke-width="15.1" stroke-linejoin="round"/>
<polygon points="480,800 600,780 650,800 550,830 480,830" fill="#000" stroke="#000" stroke-width="15.1" stroke-linejoin="round"/>
<polygon points="670,710 750,760 700,820 650,750" fill="#000" stroke="#000" stroke-width="15.1" stroke-linejoin="round"/>
<polygon points="880,860 940,860 940,917 860,917" fill="#000" stroke="#000" stroke-width="15.1" stroke-linejoin="round"/>
<polygon points="60,830 130,860 0,900" fill="#000" stroke="#000" stroke-width="15.1" stroke-linejoin="round"/>
<polyline points="60,0 50,100 50,190" stroke-width="40"/>
<polyline points="0,200 200,210 350,225 500,220 700,160 780,100 850,20 870,0" stroke-width="50"/>
<polyline points="730,60 800,20" stroke-width="60"/>
<polyline points="700,160 900,190 940,210" stroke-width="45"/>
<polyline points="40,190 40,640" stroke-width="50"/>
<polyline points="170,280 170,500" stroke-width="35"/>
<polyline points="300,280 310,630" stroke-width="40"/>
<polyline points="440,240 450,560 420,640 340,720 250,760" stroke-width="40"/>
<polyline points="0,280 440,270" stroke-width="45"/>
<polyline points="40,385 440,395" stroke-width="40"/>
<polyline points="40,500 500,510" stroke-width="40"/>
<polyline points="40,615 300,625" stroke-width="35"/>
<polyline points="500,510 620,600 700,640 760,700 860,770 940,850" stroke-width="40"/>
<polyline points="510,510 740,250 890,300 700,620" stroke-width="40"/>
<polyline points="620,440 730,280" stroke-width="30"/>
<polyline points="40,640 90,630 140,740" stroke-width="40"/>
<polyline points="0,760 200,780 350,770 500,800 700,830 940,840" stroke-width="50"/>
<polyline points="560,760 640,620" stroke-width="35"/>
<polyline points="680,700 720,760 760,720 820,650 870,670 850,720 800,760 780,850" stroke-width="35"/>
<polyline points="940,680 880,800" stroke-width="45"/>
</g>
<g transform="translate(448,441) scale(0.10576)">
<polygon points="0,0 1059,0 1059,917 0,917" fill="#808080" stroke="none"/>
<polygon points="130,0 260,0 210,60 150,30" fill="#000" stroke="#000" stroke-width="15.1" stroke-linejoin="round"/>
<polygon points="50,60 110,100 60,120" fill="#000" stroke="#000" stroke-width="15.1" stroke-linejoin="round"/>
<polygon points="0,150 60,170 100,330 0,350" fill="#000" stroke="#000" stroke-width="15.1" stroke-linejoin="round"/>
<polygon points="140,230 250,220 340,290 140,345" fill="#000" stroke="#000" stroke-width="15.1" stroke-linejoin="round"/>
<polygon points="290,50 380,30 370,130 310,130" fill="#000" stroke="#000" stroke-width="15.1" stroke-linejoin="round"/>
<polygon points="380,180 480,70 500,100 410,200" fill="#000" stroke="#000" stroke-width="15.1" stroke-linejoin="round"/>
<polygon points="240,110 270,130 280,170 240,140" fill="#000" stroke="#000" stroke-width="15.1" stroke-linejoin="round"/>
<polygon points="480,240 520,200 650,300 600,360" fill="#000" stroke="#000" stroke-width="15.1" stroke-linejoin="round"/>
<polygon points="550,130 610,100 670,170 610,210" fill="#000" stroke="#000" stroke-width="15.1" stroke-linejoin="round"/>
<polygon points="640,60 700,20 740,70 680,110" fill="#000" stroke="#000" stroke-width="15.1" stroke-linejoin="round"/>
<polygon points="720,0 800,0 780,30 740,30" fill="#000" stroke="#000" stroke-width="15.1" stroke-linejoin="round"/>
<polygon points="800,60 870,20 900,40 840,90" fill="#000" stroke="#000" stroke-width="15.1" stroke-linejoin="round"/>
<polygon points="650,220 720,170 820,200 700,300" fill="#000" stroke="#000" stroke-width="15.1" stroke-linejoin="round"/>
<polygon points="860,90 940,40 970,70 910,150" fill="#000" stroke="#000" stroke-width="15.1" stroke-linejoin="round"/>
<polygon points="990,0 1059,0 1059,40 1000,30" fill="#000" stroke="#000" stroke-width="15.1" stroke-linejoin="round"/>
<polygon points="0,380 270,380 270,490 0,520" fill="#000" stroke="#000" stroke-width="15.1" stroke-linejoin="round"/>
<polygon points="300,360 420,350 440,460 310,490" fill="#000" stroke="#000" stroke-width="15.1" stroke-linejoin="round"/>
<polygon points="460,400 550,460 450,510" fill="#000" stroke="#000" stroke-width="15.1" stroke-linejoin="round"/>
<polygon points="100,560 400,530 260,630 120,600" fill="#000" stroke="#000" stroke-width="15.1" stroke-linejoin="round"/>
<polygon points="670,430 820,310 880,360 760,440" fill="#000" stroke="#000" stroke-width="15.1" stroke-linejoin="round"/>
<polygon points="790,450 890,420 880,510 800,500" fill="#000" stroke="#000" stroke-width="15.1" stroke-linejoin="round"/>
<polygon points="850,570 920,520 920,600" fill="#000" stroke="#000" stroke-width="15.1" stroke-linejoin="round"/>
<polygon points="400,660 600,510 870,780 820,917 520,917" fill="#000" stroke="#000" stroke-width="15.1" stroke-linejoin="round"/>
<polygon points="1059,150 880,280 950,420 960,530 880,620 960,760 1059,660" fill="#000" stroke="#000" stroke-width="15.1" stroke-linejoin="round"/>
<polygon points="0,740 330,650 520,917 0,917" fill="#000" stroke="#000" stroke-width="15.1" stroke-linejoin="round"/>
<polygon points="920,800 1059,700 1059,917 980,917" fill="#000" stroke="#000" stroke-width="15.1" stroke-linejoin="round"/>
<polyline points="0,750 400,800 850,840 1059,860" stroke-width="15"/>
</g>
<g transform="translate(560,441) scale(0.10576)">
<polyline points="120,0 0,100" stroke-width="50"/>
<polyline points="0,180 100,240 190,300 240,420 280,450" stroke-width="45"/>
<polyline points="150,300 210,290" stroke-width="60"/>
<polyline points="280,450 330,390 400,370 520,370 620,400 700,430" stroke-width="45"/>
<polyline points="360,420 430,440 440,470" stroke-width="30"/>
<polyline points="280,450 170,540 60,620 0,680" stroke-width="60"/>
<polyline points="100,560 200,600 60,740 0,790" stroke-width="60"/>
<polyline points="700,430 650,600 620,780 560,917" stroke-width="40"/>
<polyline points="460,0 600,20 780,20 850,40 940,60" stroke-width="55"/>
<polyline points="800,40 820,150 760,250 720,430" stroke-width="60"/>
<polyline points="780,290 940,280" stroke-width="60"/>
<polyline points="940,540 900,660 800,700 650,820" stroke-width="50"/>
<polyline points="20,780 0,850" stroke-width="50"/>
<polyline points="0,880 200,900 360,917" stroke-width="12"/>
</g>
<g transform="translate(224,344) scale(0.10576)">
<polyline points="0,100 150,280 300,430 450,560 520,660 620,760 740,880 780,917" stroke-width="55"/>
<polyline points="0,160 100,260" stroke-width="40"/>
<polyline points="0,280 20,300 20,800" stroke-width="35"/>
<polyline points="0,390 180,380" stroke-width="30"/>
<polyline points="150,420 140,917" stroke-width="30"/>
<polyline points="520,680 500,917" stroke-width="35"/>
<polyline points="850,480 860,917" stroke-width="40"/>
<polyline points="880,540 970,580" stroke-width="30"/>
<polyline points="900,680 880,600" stroke-width="30"/>
<polyline points="180,380 300,390 450,400 600,420 700,440 850,460 950,440 1059,400" stroke-width="60"/>
<polyline points="450,560 560,500 620,460" stroke-width="45"/>
<polyline points="150,0 160,100 200,120 360,130 480,170 600,230 700,250" stroke-width="40"/>
<polyline points="220,0 200,100 180,250" stroke-width="40"/>
<polyline points="300,0 260,250" stroke-width="30"/>
<polyline points="400,0 400,120 340,250 380,400" stroke-width="40"/>
<polyline points="520,0 470,150 420,300" stroke-width="40"/>
<polyline points="680,0 600,230 600,400" stroke-width="40"/>
<polyline points="720,30 700,140 690,400" stroke-width="35"/>
<polyline points="870,160 870,440" stroke-width="40"/>
<polyline points="990,140 1020,230 1059,260" stroke-width="40"/>
<polyline points="180,250 400,270 560,300 600,300" stroke-width="40"/>
<polyline points="700,280 870,290" stroke-width="40"/>
<polyline points="900,310 1059,260" stroke-width="40"/>
<polyline points="700,140 870,160 1059,80" stroke-width="40"/>
<polyline points="740,0 790,80 880,120 1000,60 1059,0" stroke-width="45"/>
<polyline points="330,420 420,510" stroke-width="30"/>
<polyline points="380,300 520,330" stroke-width="30"/>
</g>
<g transform="translate(336,344) scale(0.10576)">
<polygon points="0,0 1059,0 1059,917 0,917" fill="#808080" stroke="none"/>
<polygon points="30,30 230,0 230,60 180,130 60,90" fill="#000" stroke="#000" stroke-width="15.1" stroke-linejoin="round"/>
<polygon points="50,130 110,160 120,230 160,250 250,280 90,300" fill="#000" stroke="#000" stroke-width="15.1" stroke-linejoin="round"/>
<polygon points="240,60 300,70 310,180 270,200 200,130" fill="#000" stroke="#000" stroke-width="15.1" stroke-linejoin="round"/>
<polygon points="320,90 420,80 360,190" fill="#000" stroke="#000" stroke-width="15.1" stroke-linejoin="round"/>
<polygon points="450,120 560,140 580,200 520,250 360,280 420,180" fill="#000" stroke="#000" stroke-width="15.1" stroke-linejoin="round"/>
<polygon points="590,0 800,0 740,40 620,40" fill="#000" stroke="#000" stroke-width="15.1" stroke-linejoin="round"/>
<polygon points="660,190 720,200 720,300 640,330 600,270" fill="#000" stroke="#000" stroke-width="15.1" stroke-linejoin="round"/>
<polygon points="770,240 1040,330 1000,540 820,520 640,490 680,360" fill="#000" stroke="#000" stroke-width="15.1" stroke-linejoin="round"/>
<polygon points="0,400 50,400 50,480 130,490 150,670 250,680 260,917 0,917" fill="#000" stroke="#000" stroke-width="15.1" stroke-linejoin="round"/>
<polygon points="80,360 120,360 120,460 80,460" fill="#000" stroke="#000" stroke-width="15.1" stroke-linejoin="round"/>
<polygon points="150,360 270,360 270,470 150,460" fill="#000" stroke="#000" stroke-width="15.1" stroke-linejoin="round"/>
<polygon points="150,490 270,490 270,530 150,520" fill="#000" stroke="#000" stroke-width="15.1" stroke-linejoin="round"/>
<polygon points="150,560 260,560 250,610 150,600" fill="#000" stroke="#000" stroke-width="15.1" stroke-linejoin="round"/>
<polygon points="320,340 570,550 540,620 310,610" fill="#000" stroke="#000" stroke-width="15.1" stroke-linejoin="round"/>
<polygon points="480,330 540,290 610,380 570,440 520,400" fill="#000" stroke="#000" stroke-width="15.1" stroke-linejoin="round"/>
<polygon points="560,570 620,570 850,740 780,800 560,640" fill="#000" stroke="#000" stroke-width="15.1" stroke-linejoin="round"/>
<polygon points="780,560 880,550 930,600 870,680" fill="#000" stroke="#000" stroke-width="15.1" stroke-linejoin="round"/>
<polygon points="340,660 480,660 740,830 700,917 570,917 500,780 340,790" fill="#000" stroke="#000" stroke-width="15.1" stroke-linejoin="round"/>
<polygon points="300,830 380,840 370,917 300,917" fill="#000" stroke="#000" stroke-width="15.1" stroke-linejoin="round"/>
<polygon points="850,60 1059,130 1059,230 830,140" fill="#000" stroke="#000" stroke-width="15.1" stroke-linejoin="round"/>
<polygon points="930,620 1059,560 1059,650 980,750 930,720" fill="#000" stroke="#000" stroke-width="15.1" stroke-linejoin="round"/>
<polygon points="1000,760 1059,760 1059,840" fill="#000" stroke="#000" stroke-width="15.1" stroke-linejoin="round"/>
<polygon points="0,0 20,0 0,30" fill="#000" stroke="#000" stroke-width="15.1" stroke-linejoin="round"/>
<polygon points="0,240 40,260 0,330" fill="#000" stroke="#000" stroke-width="15.1" stroke-linejoin="round"/>
</g>
<g transform="translate(224,441) scale(0.10576)">
<polyline points="140,0 140,80 20,90 20,250" stroke-width="35"/>
<polyline points="0,250 250,230 480,220" stroke-width="45"/>
<polyline points="490,0 500,100 480,400 450,600 430,917" stroke-width="50"/>
<polyline points="470,20 490,40" stroke-width="40"/>
<polyline points="370,120 370,220" stroke-width="35"/>
<polyline points="380,120 470,120 470,210" stroke-width="40"/>
<polyline points="180,280 180,370" stroke-width="30"/>
<polyline points="290,270 330,330 290,350" stroke-width="35"/>
<polyline points="360,270 360,360 440,290" stroke-width="35"/>
<polyline points="380,380 380,450 460,460" stroke-width="40"/>
<polyline points="510,390 540,430 520,490" stroke-width="35"/>
<polyline points="750,0 870,130 1059,320" stroke-width="50"/>
<polyline points="870,130 880,400 930,620 940,917" stroke-width="40"/>
<polyline points="650,430 760,430 870,400" stroke-width="25"/>
<polyline points="460,640 700,630 1059,630" stroke-width="45"/>
<polyline points="950,820 1059,820" stroke-width="60"/>
<polyline points="960,880 1059,860" stroke-width="40"/>
</g>
<g transform="translate(336,441) scale(0.10576)">
<polygon points="320,530 600,510 600,600 500,700 420,700 330,600" fill="#808080" stroke="none"/>
<polygon points="0,740 120,720 150,800 100,917 0,917" fill="#808080" stroke="none"/>
<polyline points="0,300 100,400 200,520 300,620 420,760 520,860 560,917" stroke-width="45"/>
<polyline points="100,360 160,400 250,500 330,540" stroke-width="35"/>
<polyline points="50,90 280,60 300,250 50,270 50,90" stroke-width="40"/>
<polyline points="280,0 300,250 340,520" stroke-width="40"/>
<polyline points="280,60 560,20 700,0" stroke-width="40"/>
<polyline points="320,220 520,210 560,130 580,60" stroke-width="40"/>
<polyline points="580,40 690,30 700,110 830,110 1059,90" stroke-width="45"/>
<polyline points="700,110 720,350 620,370 600,300 700,270" stroke-width="35"/>
<polyline points="620,370 640,490 520,470 520,510" stroke-width="35"/>
<polyline points="840,0 830,400 820,917" stroke-width="40"/>
<polyline points="860,0 880,150 900,350 1059,350" stroke-width="35"/>
<polyline points="880,30 1059,30" stroke-width="30"/>
<polyline points="900,130 1059,140" stroke-width="30"/>
<polyline points="900,190 1000,190" stroke-width="30"/>
<polyline points="900,280 1000,280" stroke-width="30"/>
<polyline points="1000,0 1010,350" stroke-width="30"/>
<polyline points="320,540 600,510 830,500" stroke-width="50"/>
<polyline points="0,620 300,620" stroke-width="40"/>
<polyline points="430,660 600,620 830,620 1059,660" stroke-width="45"/>
<polyline points="450,770 600,680 830,630" stroke-width="45"/>
<polyline points="840,540 950,430 1059,430" stroke-width="40"/>
<polyline points="840,590 1059,530" stroke-width="35"/>
<polyline points="840,690 1059,750" stroke-width="18"/>
<polyline points="420,760 300,917" stroke-width="40"/>
<polyline points="110,690 190,650 180,770" stroke-width="25"/>
</g>
<g transform="translate(173,264) scale(0.15109)">
<polygon points="0,0 1059,0 1059,662 0,662" fill="#808080" stroke="none"/>
<polygon points="130,0 410,0 410,40 300,50 130,70" fill="#000" stroke="#000" stroke-width="10.6" stroke-linejoin="round"/>
<polygon points="0,0 100,0 0,20" fill="#000" stroke="#000" stroke-width="10.6" stroke-linejoin="round"/>
<polygon points="0,50 120,80 40,160 20,230 0,230" fill="#000" stroke="#000" stroke-width="10.6" stroke-linejoin="round"/>
<polygon points="440,0 540,0 540,50 450,50" fill="#000" stroke="#000" stroke-width="10.6" stroke-linejoin="round"/>
<polygon points="580,0 690,0 700,30 580,40" fill="#000" stroke="#000" stroke-width="10.6" stroke-linejoin="round"/>
<polygon points="860,0 1000,0 1000,30 860,40" fill="#000" stroke="#000" stroke-width="10.6" stroke-linejoin="round"/>
<polygon points="380,120 500,120 500,165 380,160" fill="#000" stroke="#000" stroke-width="10.6" stroke-linejoin="round"/>
<polygon points="510,130 560,130 560,175 510,170" fill="#000" stroke="#000" stroke-width="10.6" stroke-linejoin="round"/>
<polygon points="580,130 620,130 610,170 580,170" fill="#000" stroke="#000" stroke-width="10.6" stroke-linejoin="round"/>
<polygon points="660,110 700,110 700,160 660,160" fill="#000" stroke="#000" stroke-width="10.6" stroke-linejoin="round"/>
<polygon points="720,120 760,120 760,170 720,170" fill="#000" stroke="#000" stroke-width="10.6" stroke-linejoin="round"/>
<polygon points="770,100 840,110 830,180 770,180" fill="#000" stroke="#000" stroke-width="10.6" stroke-linejoin="round"/>
<polygon points="260,200 320,190 310,270 260,270" fill="#000" stroke="#000" stroke-width="10.6" stroke-linejoin="round"/>
<polygon points="340,210 400,210 400,260 340,260" fill="#000" stroke="#000" stroke-width="10.6" stroke-linejoin="round"/>
<polygon points="420,210 460,210 460,260 420,260" fill="#000" stroke="#000" stroke-width="10.6" stroke-linejoin="round"/>
<polygon points="480,210 520,210 520,260 480,260" fill="#000" stroke="#000" stroke-width="10.6" stroke-linejoin="round"/>
<polygon points="530,210 570,210 570,260 530,260" fill="#000" stroke="#000" stroke-width="10.6" stroke-linejoin="round"/>
<polygon points="590,220 640,220 640,260 590,260" fill="#000" stroke="#000" stroke-width="10.6" stroke-linejoin="round"/>
<polygon points="660,210 720,210 720,250 660,250" fill="#000" stroke="#000" stroke-width="10.6" stroke-linejoin="round"/>
<polygon points="740,220 790,220 790,260 740,260" fill="#000" stroke="#000" stroke-width="10.6" stroke-linejoin="round"/>
<polygon points="810,220 840,220 830,260 810,260" fill="#000" stroke="#000" stroke-width="10.6" stroke-linejoin="round"/>
<polygon points="150,140 200,140 200,160 150,160" fill="#000" stroke="#000" stroke-width="10.6" stroke-linejoin="round"/>
<polygon points="180,210 230,210 230,240 180,240" fill="#000" stroke="#000" stroke-width="10.6" stroke-linejoin="round"/>
<polygon points="280,320 420,320 400,335 280,335" fill="#000" stroke="#000" stroke-width="10.6" stroke-linejoin="round"/>
<polygon points="180,320 220,340 240,380 190,360" fill="#000" stroke="#000" stroke-width="10.6" stroke-linejoin="round"/>
<polygon points="260,350 340,360 380,400 290,400" fill="#000" stroke="#000" stroke-width="10.6" stroke-linejoin="round"/>
<polygon points="440,360 540,370 520,410 440,400" fill="#000" stroke="#000" stroke-width="10.6" stroke-linejoin="round"/>
<polygon points="560,370 660,370 640,400 560,400" fill="#000" stroke="#000" stroke-width="10.6" stroke-linejoin="round"/>
<polygon points="690,340 790,320 720,400 680,390" fill="#000" stroke="#000" stroke-width="10.6" stroke-linejoin="round"/>
<polygon points="100,270 140,270 140,300 100,300" fill="#000" stroke="#000" stroke-width="10.6" stroke-linejoin="round"/>
<polygon points="900,80 970,80 970,160 900,160" fill="#000" stroke="#000" stroke-width="10.6" stroke-linejoin="round"/>
<polygon points="930,200 990,200 990,340 930,340" fill="#000" stroke="#000" stroke-width="10.6" stroke-linejoin="round"/>
<polygon points="1000,60 1059,60 1059,330 1000,330" fill="#000" stroke="#000" stroke-width="10.6" stroke-linejoin="round"/>
<polygon points="870,220 900,220 900,300 870,300" fill="#000" stroke="#000" stroke-width="10.6" stroke-linejoin="round"/>
<polygon points="0,380 100,410 110,470 0,480" fill="#000" stroke="#000" stroke-width="10.6" stroke-linejoin="round"/>
<polygon points="470,520 520,520 510,662 460,662" fill="#000" stroke="#000" stroke-width="10.6" stroke-linejoin="round"/>
<polygon points="540,520 600,520 590,662 540,662" fill="#000" stroke="#000" stroke-width="10.6" stroke-linejoin="round"/>
<polygon points="620,520 690,510 680,662 610,662" fill="#000" stroke="#000" stroke-width="10.6" stroke-linejoin="round"/>
<polygon points="710,510 800,500 780,662 700,662" fill="#000" stroke="#000" stroke-width="10.6" stroke-linejoin="round"/>
<polygon points="800,420 870,400 850,500 790,500" fill="#000" stroke="#000" stroke-width="10.6" stroke-linejoin="round"/>
<polygon points="880,540 960,540 950,662 880,662" fill="#000" stroke="#000" stroke-width="10.6" stroke-linejoin="round"/>
<polygon points="980,560 1059,540 1059,662 980,662" fill="#000" stroke="#000" stroke-width="10.6" stroke-linejoin="round"/>
<polygon points="880,420 950,400 980,480 900,500" fill="#000" stroke="#000" stroke-width="10.6" stroke-linejoin="round"/>
<polygon points="1000,390 1059,380 1059,500 1000,480" fill="#000" stroke="#000" stroke-width="10.6" stroke-linejoin="round"/>
<polygon points="0,0 30,0 0,40" fill="#000" stroke="#000" stroke-width="10.6" stroke-linejoin="round"/>
<polygon points="0,220 28,220 35,330 0,385" fill="#000" stroke="#000" stroke-width="10.6" stroke-linejoin="round"/>
<polygon points="300,460 420,455 420,490 300,485" fill="#000" stroke="#000" stroke-width="10.6" stroke-linejoin="round"/>
<polygon points="440,462 540,462 540,490 440,490" fill="#000" stroke="#000" stroke-width="10.6" stroke-linejoin="round"/>
<polygon points="560,462 720,455 700,490 560,490" fill="#000" stroke="#000" stroke-width="10.6" stroke-linejoin="round"/>
<polygon points="0,505 100,510 250,530 280,515 440,505 460,560 420,662 0,662" fill="#000" stroke="#000" stroke-width="10.6" stroke-linejoin="round"/>
<polyline points="0,500 250,520 440,500" stroke-width="35"/>
<polyline points="120,520 240,662" stroke-width="35"/>
</g>
<g transform="translate(308,254) scale(0.15109)">
<polygon points="0,0 1059,0 1059,596 0,596" fill="#808080" stroke="none"/>
<polygon points="180,50 320,40 340,15 740,10 750,90 480,105 200,110" fill="#000" stroke="#000" stroke-width="10.6" stroke-linejoin="round"/>
<polygon points="780,0 1059,0 1059,190 940,200 760,160 770,60" fill="#000" stroke="#000" stroke-width="10.6" stroke-linejoin="round"/>
<polygon points="0,0 60,0 40,40 0,80" fill="#000" stroke="#000" stroke-width="10.6" stroke-linejoin="round"/>
<polygon points="110,150 200,150 200,220 350,200 350,390 100,390" fill="#000" stroke="#000" stroke-width="10.6" stroke-linejoin="round"/>
<polygon points="30,260 70,260 70,400 30,400" fill="#000" stroke="#000" stroke-width="10.6" stroke-linejoin="round"/>
<polygon points="0,160 40,170 40,240 0,250" fill="#000" stroke="#000" stroke-width="10.6" stroke-linejoin="round"/>
<polygon points="390,140 480,125 690,170 680,380 600,420 380,400" fill="#000" stroke="#000" stroke-width="10.6" stroke-linejoin="round"/>
<polygon points="700,190 930,220 850,480 700,430 680,380" fill="#000" stroke="#000" stroke-width="10.6" stroke-linejoin="round"/>
<polygon points="950,220 1059,200 1059,540 870,490" fill="#000" stroke="#000" stroke-width="10.6" stroke-linejoin="round"/>
<polygon points="80,440 170,430 160,490 110,490" fill="#000" stroke="#000" stroke-width="10.6" stroke-linejoin="round"/>
<polygon points="190,430 220,430 220,510 180,510" fill="#000" stroke="#000" stroke-width="10.6" stroke-linejoin="round"/>
<polygon points="240,430 290,430 290,520 230,520" fill="#000" stroke="#000" stroke-width="10.6" stroke-linejoin="round"/>
<polygon points="310,440 400,440 390,560 300,550" fill="#000" stroke="#000" stroke-width="10.6" stroke-linejoin="round"/>
<polygon points="420,450 520,450 510,580 420,560" fill="#000" stroke="#000" stroke-width="10.6" stroke-linejoin="round"/>
<polygon points="560,460 700,490 680,596 540,596" fill="#000" stroke="#000" stroke-width="10.6" stroke-linejoin="round"/>
<polygon points="720,500 800,520 780,596 710,596" fill="#000" stroke="#000" stroke-width="10.6" stroke-linejoin="round"/>
<polygon points="140,540 200,560 190,596 130,596" fill="#000" stroke="#000" stroke-width="10.6" stroke-linejoin="round"/>
<polygon points="210,560 330,580 330,596 200,596" fill="#000" stroke="#000" stroke-width="10.6" stroke-linejoin="round"/>
<polygon points="0,280 20,280 20,420 0,420" fill="#000" stroke="#000" stroke-width="10.6" stroke-linejoin="round"/>
<polyline points="330,0 390,80" stroke-width="14"/>
<polyline points="750,0 750,70" stroke-width="25"/>
</g>
<g transform="translate(-52,-86)">
</g></g></svg>

<rect x="62.5" y="97.5" width="98" height="5" fill="#000" stroke="#7e90a6"/>
<rect x="62" y="97" width="38" height="6" fill="url(#gScroll)" stroke="#6a8ac0" stroke-width="0.8"/>
<path d="M98.5,92.5 L112.5,92.5 L112.5,101 L105.5,107.5 L98.5,101 Z" fill="url(#gScroll)" stroke="#6a7a8a" stroke-width="0.8"/>
<path d="M62.5,116 V126 M111.5,116 V126 M160.5,116 V126 M86.5,119 V124 M136.5,119 V124 M62,121.5 H161" stroke="#fff" stroke-width="1"/>

<text x="62" y="139" font-size="11" font-weight="normal" fill="#fff" textLength="7" lengthAdjust="spacingAndGlyphs" >0</text>
<text x="116.5" y="139" font-size="11" font-weight="normal" fill="#fff" textLength="44.5" lengthAdjust="spacingAndGlyphs" >1091 m</text>
<rect x="721" y="86" width="336" height="798" fill="#eeeeee" />
<rect x="721" y="86" width="1" height="798" fill="#e4e4e4" />
<rect x="722" y="86" width="3" height="798" fill="#f6f6f6" />
<rect x="1055" y="86" width="1" height="798" fill="#f6f6f6" />
<rect x="727.5" y="87.5" width="327" height="169" fill="none" stroke="#ffffff" stroke-width="1" />
<rect x="726.5" y="86.5" width="327" height="169" fill="none" stroke="#a6a6a6" stroke-width="1" />
<rect x="730.5" y="93.5" width="10" height="10" rx="2" fill="#fff" stroke="#000" stroke-width="1.2"/>
<path d="M732.5,97 L738.5,97 L735.5,100.5 Z" fill="#000"/>
<g transform="translate(745,87)" stroke="#bbb" stroke-width="0.8" fill="#f4f4f4"><path d="M2,16 L14,16 L13,19 L1,19 Z"/><path d="M2,12 L14,12 L13,16 L1,16 Z"/><path d="M3,6 L16,6 L14,12 L1,12 Z"/></g>
<text x="768.6" y="101.4" font-size="12" font-weight="bold" fill="#333" textLength="38.7" lengthAdjust="spacingAndGlyphs" >Layers</text>
<rect x="1022" y="90" width="32" height="16" fill="url(#gHdrBtn)"/>
<path d="M1024,98 L1029,97.5 L1029,98.5 Z M1028,98 H1031" stroke="#666" stroke-width="1.3" fill="#888"/>
<path d="M1031,93 L1033,95 L1035,95 L1037,93 L1037,103 L1035,101 L1033,101 L1031,103 Z" fill="#999" stroke="#333" stroke-width="0.9"/>
<rect x="1040.5" y="92.5" width="10" height="10" rx="2.5" fill="#e8e8e8" stroke="#808080" stroke-width="1.6"/>
<path d="M1042.5,94.5 L1048.5,100.5 M1048.5,94.5 L1042.5,100.5" stroke="#808080" stroke-width="1.2"/>
<path d="M1043,95 L1048,100 M1048,95 L1043,100" stroke="#fff" stroke-width="1.3"/>
<rect x="728.5" y="108.5" width="324" height="114" fill="#eeeeee" stroke="#7a8a99" stroke-width="1" />
<rect x="729" y="109" width="323" height="18" fill="#b8cfe5" />
<text x="731" y="122.5" font-size="8" font-weight="bold" fill="#111" textLength="14.5" lengthAdjust="spacingAndGlyphs" >GPX</text>
<text x="750.2" y="122" font-size="12" font-weight="bold" fill="#333" textLength="49.2" lengthAdjust="spacingAndGlyphs" >test.gpx</text>
<path d="M741,133 L746,128 L747,130 L742,135 Z" fill="#2a5aa8"/><circle cx="738" cy="139" r="5.5" fill="#2a9a2a" stroke="#176017" stroke-width="0.6"/><path d="M735,139 L737.5,141.5 L741.5,136" stroke="#fff" stroke-width="1.6" fill="none"/>
<text x="750.2" y="141.5" font-size="12" font-weight="bold" fill="#333" textLength="103" lengthAdjust="spacingAndGlyphs" >Validation errors</text>
<rect x="728.5" y="223.5" width="53" height="32" fill="#eeeeee" stroke="#a4a4a4"/>
<rect x="782.5" y="223.5" width="54" height="32" fill="url(#gOcean)" stroke="#7a8a99"/>
<rect x="837.5" y="223.5" width="52" height="32" fill="url(#gOcean)" stroke="#7a8a99"/>
<rect x="890.5" y="223.5" width="54" height="32" fill="url(#gOcean)" stroke="#7a8a99"/>
<rect x="945.5" y="223.5" width="52" height="32" fill="#eeeeee" stroke="#a4a4a4"/>
<rect x="998.5" y="223.5" width="54" height="32" fill="url(#gOcean)" stroke="#7a8a99"/>

<path d="M746,242 L756,232 L766,242 L760,242 L760,249 L752,249 L752,242 Z" fill="#c6c6c6"/>
<ellipse cx="809" cy="249" rx="9" ry="2" fill="#000" opacity="0.1"/>
<path d="M805,231 L813,231 L813,239 L818,239 L809,248 L800,239 L805,239 Z" fill="#3a70c0" stroke="#1d4a8a" stroke-width="0.8"/>
<path d="M854,233 L873,233 L869,246 L850,246 Z" fill="#a8a8a8"/><path d="M852,236 L871,236 L867,244 L849,244 Z" fill="#8fc030"/>
<circle cx="862" cy="240" r="5.5" fill="#1a9a1a" stroke="#fff" stroke-width="0.8"/><path d="M859,240 L861.5,242.5 L865.5,237.5" stroke="#fff" stroke-width="1.6" fill="none"/>
<path d="M906,248 L925,229" stroke="#222" stroke-width="1.4"/>
<ellipse cx="911" cy="235" rx="4" ry="2.5" fill="#3a6ab0"/><circle cx="919" cy="243" r="4.5" fill="none" stroke="#e02020" stroke-width="1.6"/><circle cx="919" cy="243" r="2" fill="#3a6ab0"/>
<g fill="#c6c6c6"><path d="M963,233 L977,233 L975,238 L961,238 Z"/><path d="M962,239 L975,239 L974,243 L961,243 Z"/><path d="M962,244 L975,244 L974,247 L961,247 Z"/></g>
<path d="M979,231 V245 M976,242 L979,246 L982,242" stroke="#c6c6c6" stroke-width="1.6" fill="none"/>
<path d="M1017,235 Q1017,231 1025,231 Q1033,231 1033,235 L1032,246 Q1025,249 1018,246 Z" fill="#7a7a7a" stroke="#333" stroke-width="0.8"/>
<ellipse cx="1025" cy="235" rx="6" ry="2.5" fill="#444"/>
<path d="M1021,239 V246 M1025,239 V247 M1029,239 V246" stroke="#aaa" stroke-width="1"/>

<rect x="727.5" y="263.5" width="327" height="218" fill="none" stroke="#ffffff" stroke-width="1" />
<rect x="726.5" y="262.5" width="327" height="218" fill="none" stroke="#a6a6a6" stroke-width="1" />
<rect x="730.5" y="269.5" width="10" height="10" rx="2" fill="#fff" stroke="#000" stroke-width="1.2"/>
<path d="M732.5,273 L738.5,273 L735.5,276.5 Z" fill="#000"/>
<g transform="translate(745,263)"><path d="M1,2 L10,2 L13,5 L13,18 L1,18 Z" fill="#eee" stroke="#bbb"/><path d="M3,15 L8,10 Q8,7 10,7 L11,9 L13,9" stroke="#ccc" fill="none" stroke-width="1.2"/></g>
<text x="768.6" y="277.4" font-size="12" font-weight="bold" fill="#333" textLength="161" lengthAdjust="spacingAndGlyphs" >Properties / Memberships</text>
<rect x="1022" y="266" width="32" height="16" fill="url(#gHdrBtn)"/>
<path d="M1024,274 L1029,273.5 L1029,274.5 Z M1028,274 H1031" stroke="#666" stroke-width="1.3" fill="#888"/>
<path d="M1031,269 L1033,271 L1035,271 L1037,269 L1037,279 L1035,277 L1033,277 L1031,279 Z" fill="#999" stroke="#333" stroke-width="0.9"/>
<rect x="1040.5" y="268.5" width="10" height="10" rx="2.5" fill="#e8e8e8" stroke="#808080" stroke-width="1.6"/>
<path d="M1042.5,270.5 L1048.5,276.5 M1048.5,270.5 L1042.5,276.5" stroke="#808080" stroke-width="1.2"/>
<path d="M1043,271 L1048,276 M1048,271 L1043,276" stroke="#fff" stroke-width="1.3"/>
<rect x="728.5" y="284.5" width="324" height="163" fill="#eeeeee" stroke="#7a8a99" stroke-width="1" />
<text x="739.2" y="363" font-size="12" font-weight="bold" fill="#333" textLength="279" lengthAdjust="spacingAndGlyphs" >Please select the objects you want to change</text>
<text x="739.2" y="378" font-size="12" font-weight="bold" fill="#333" textLength="85" lengthAdjust="spacingAndGlyphs" >properties for.</text>
<rect x="728.5" y="449.5" width="108" height="31" fill="#eeeeee" stroke="#a4a4a4"/>
<rect x="837.5" y="449.5" width="106" height="31" fill="#eeeeee" stroke="#a4a4a4"/>
<rect x="944.5" y="449.5" width="108" height="31" fill="#eeeeee" stroke="#a4a4a4"/>
<path d="M768,458 V472 M761,465 H775" stroke="#c6c6c6" stroke-width="3"/>
<path d="M870,457 L882,457 L885,460 L885,473 L870,473 Z" fill="#d6d6d6" stroke="#cfcfcf"/>
<path d="M968,462 Q968,455 976,455 Q984,455 984,462 L983,474 Q976,477 969,474 Z" fill="#d4d4d4" stroke="#c8c8c8"/>
<text x="781.4" y="469.6" font-size="12" font-weight="bold" fill="#999" textLength="24.6" lengthAdjust="spacingAndGlyphs" >Add</text>
<text x="889.4" y="469.6" font-size="12" font-weight="bold" fill="#999" textLength="24" lengthAdjust="spacingAndGlyphs" >Edit</text>
<rect x="903" y="472" width="4" height="1" fill="#999" />
<text x="991.4" y="469.6" font-size="12" font-weight="bold" fill="#999" textLength="39.6" lengthAdjust="spacingAndGlyphs" >Delete</text>
<rect x="727.5" y="488.5" width="327" height="220" fill="none" stroke="#ffffff" stroke-width="1" />
<rect x="726.5" y="487.5" width="327" height="220" fill="none" stroke="#a6a6a6" stroke-width="1" />
<rect x="730.5" y="494.5" width="10" height="10" rx="2" fill="#fff" stroke="#000" stroke-width="1.2"/>
<path d="M732.5,498 L738.5,498 L735.5,501.5 Z" fill="#000"/>
<g transform="translate(746,488)"><rect x="0.5" y="2.5" width="11" height="16" fill="#eee" stroke="#bbb"/><path d="M3,5 V7 M3,9 V11 M3,13 V15" stroke="#d33"/><rect x="8" y="3" width="3" height="15" fill="#ddd"/></g>
<text x="768.6" y="502.4" font-size="12" font-weight="bold" fill="#333" textLength="55.5" lengthAdjust="spacingAndGlyphs" >Selection</text>
<rect x="1022" y="491" width="32" height="16" fill="url(#gHdrBtn)"/>
<path d="M1024,499 L1029,498.5 L1029,499.5 Z M1028,499 H1031" stroke="#666" stroke-width="1.3" fill="#888"/>
<path d="M1031,494 L1033,496 L1035,496 L1037,494 L1037,504 L1035,502 L1033,502 L1031,504 Z" fill="#999" stroke="#333" stroke-width="0.9"/>
<rect x="1040.5" y="493.5" width="10" height="10" rx="2.5" fill="#e8e8e8" stroke="#808080" stroke-width="1.6"/>
<path d="M1042.5,495.5 L1048.5,501.5 M1048.5,495.5 L1042.5,501.5" stroke="#808080" stroke-width="1.2"/>
<path d="M1043,496 L1048,501 M1048,496 L1043,501" stroke="#fff" stroke-width="1.3"/>
<rect x="728.5" y="510.5" width="324" height="167" fill="#ffffff" stroke="#7a8a99" stroke-width="1" />
<rect x="728.5" y="679.5" width="108" height="28" fill="url(#gOcean)" stroke="#7a8a99"/>
<rect x="837.5" y="679.5" width="106" height="28" fill="url(#gOcean)" stroke="#7a8a99"/>
<rect x="944.5" y="679.5" width="108" height="28" fill="url(#gOcean)" stroke="#7a8a99"/>

<rect x="754.5" y="686.5" width="16" height="15" fill="none" stroke="#333" stroke-width="0.8" stroke-dasharray="1.5,1.5"/>
<path d="M760,690 L760,702 L763,699 L765,703 L767,702 L765,698 L769,698 Z" fill="#fff" stroke="#222" stroke-width="0.8"/>
<rect x="817" y="685" width="14" height="16" fill="#eeeeee" opacity="0.8"/>
<path d="M820,691 L828,691 L824,695 Z" fill="#111"/>
<path d="M861,690 Q862,684 869,684 Q872,684 874,686 L876,683 L876,690 L869,690 L871,688 Q870,687 869,687 Q865,687 864,690 Z" fill="#3a80d0" stroke="#1a4a90" stroke-width="0.6"/>
<path d="M876,694 Q875,700 868,700 Q865,700 863,698 L861,701 L861,694 L868,694 L866,696 Q867,697 868,697 Q872,697 873,694 Z" fill="#3a80d0" stroke="#1a4a90" stroke-width="0.6"/>
<path d="M969,685 L979,685 L983,689 L983,701 L969,701 Z" fill="#f4f4f4" stroke="#999"/>
<circle cx="976" cy="693" r="4" fill="#ddd" stroke="#555"/><path d="M979,696 L984,701" stroke="#333" stroke-width="2"/>
<rect x="1033" y="685" width="14" height="16" fill="#eeeeee" opacity="0.8"/>
<path d="M1036,691 L1044,691 L1040,695 Z" fill="#111"/>

<text x="774.9" y="698" font-size="12" font-weight="bold" fill="#333" textLength="36.5" lengthAdjust="spacingAndGlyphs" >Select</text>
<text x="880.3" y="698" font-size="12" font-weight="bold" fill="#333" textLength="42" lengthAdjust="spacingAndGlyphs" >Reload</text>
<text x="988.7" y="698" font-size="12" font-weight="bold" fill="#333" textLength="40.2" lengthAdjust="spacingAndGlyphs" >Search</text>
<rect x="727.5" y="715.5" width="327" height="169" fill="none" stroke="#ffffff" stroke-width="1" />
<rect x="726.5" y="714.5" width="327" height="169" fill="none" stroke="#a6a6a6" stroke-width="1" />
<rect x="730.5" y="720.5" width="10" height="10" rx="2" fill="#fff" stroke="#000" stroke-width="1.2"/>
<path d="M732.5,724 L738.5,724 L735.5,727.5 Z" fill="#000"/>
<g transform="translate(746,714)"><rect x="0.5" y="1.5" width="14" height="16" fill="#fff" stroke="#ccc"/><path d="M3,4 H8 M9,4 H13 M3,8 H7 M9,8 H13 M3,12 H13 M3,15 H10" stroke="#888" stroke-width="1"/><path d="M2,3 V15" stroke="#88c" stroke-width="0.8"/></g>
<text x="768.6" y="728.4" font-size="12" font-weight="bold" fill="#333" textLength="100.2" lengthAdjust="spacingAndGlyphs" >Command Stack</text>
<rect x="1022" y="717" width="32" height="16" fill="url(#gHdrBtn)"/>
<path d="M1024,725 L1029,724.5 L1029,725.5 Z M1028,725 H1031" stroke="#666" stroke-width="1.3" fill="#888"/>
<path d="M1031,720 L1033,722 L1035,722 L1037,720 L1037,730 L1035,728 L1033,728 L1031,730 Z" fill="#999" stroke="#333" stroke-width="0.9"/>
<rect x="1040.5" y="719.5" width="10" height="10" rx="2.5" fill="#e8e8e8" stroke="#808080" stroke-width="1.6"/>
<path d="M1042.5,721.5 L1048.5,727.5 M1048.5,721.5 L1042.5,727.5" stroke="#808080" stroke-width="1.2"/>
<path d="M1043,722 L1048,727 M1048,722 L1043,727" stroke="#fff" stroke-width="1.3"/>
<rect x="728.5" y="736.5" width="324" height="145" fill="#ffffff" stroke="#7a8a99" stroke-width="1" />
<rect x="2" y="884" width="1055" height="30" fill="#eeeeee" />
<rect x="7" y="890" width="105" height="19" fill="#b8cfe5" />
<rect x="115" y="890" width="113" height="19" fill="#b8cfe5" />
<rect x="231" y="890" width="73" height="19" fill="#b8cfe5" />
<rect x="307" y="890" width="73" height="19" fill="#b8cfe5" />
<rect x="382" y="890" width="90" height="19" fill="#b8cfe5" />
<rect x="475" y="890" width="185" height="19" fill="#b8cfe5" />
<rect x="663.5" y="890.5" width="388" height="18" fill="#eeeeee" stroke="#b8cfe5"/>

<circle cx="16" cy="899.5" r="8" fill="none" stroke="#222" stroke-width="0.9"/>
<path d="M7,899.5 H25" stroke="#e03010" stroke-width="2"/>
<circle cx="124" cy="899.5" r="8" fill="none" stroke="#222" stroke-width="0.9"/>
<path d="M124,891 V908" stroke="#e03010" stroke-width="2"/>
<circle cx="240" cy="900" r="7.5" fill="none" stroke="#222" stroke-width="0.9"/>
<path d="M237,903 L247,893" stroke="#e03010" stroke-width="2"/>
<path d="M308,905 L322,895 M308,905.5 H324" stroke="#111" stroke-width="2"/>
<path d="M316,899 L318,904 M320,897 L322,904" stroke="#111" stroke-width="0.8" stroke-dasharray="1,1"/>
<rect x="383.5" y="899.5" width="16" height="5" fill="none" stroke="#111" stroke-width="1.2"/>
<path d="M386,900 V902 M389,900 V902 M392,900 V902 M395,900 V902" stroke="#111" stroke-width="0.8"/>
<path d="M478,904 L485,894 L490,892" stroke="#e03010" stroke-width="1.5" fill="none"/>
<path d="M476,905 L481,902 M484,893 L488,891" stroke="#111" stroke-width="1.2"/>
<path d="M482,894 L482,906 L485,903 L487,908 L489,907 L487,902 L491,902 Z" fill="#fff" stroke="#111" stroke-width="0.9"/>

<text x="28.5" y="904.5" font-size="12.5" font-weight="bold" fill="#333" textLength="50" lengthAdjust="spacingAndGlyphs" >54.1185</text>
<text x="136.3" y="904.5" font-size="12.5" font-weight="bold" fill="#333" textLength="50" lengthAdjust="spacingAndGlyphs" >13.4096</text>
<text x="497" y="904.5" font-size="12" font-weight="bold" fill="#333" textLength="64" lengthAdjust="spacingAndGlyphs" >(no object)</text>
<text x="666.4" y="903.6" font-size="12" font-weight="normal" fill="#333" textLength="381.5" lengthAdjust="spacingAndGlyphs" >on (Ctrl to toggle); Shift-Ctrl to rotate selected; or change selection</text></svg></body></html>
